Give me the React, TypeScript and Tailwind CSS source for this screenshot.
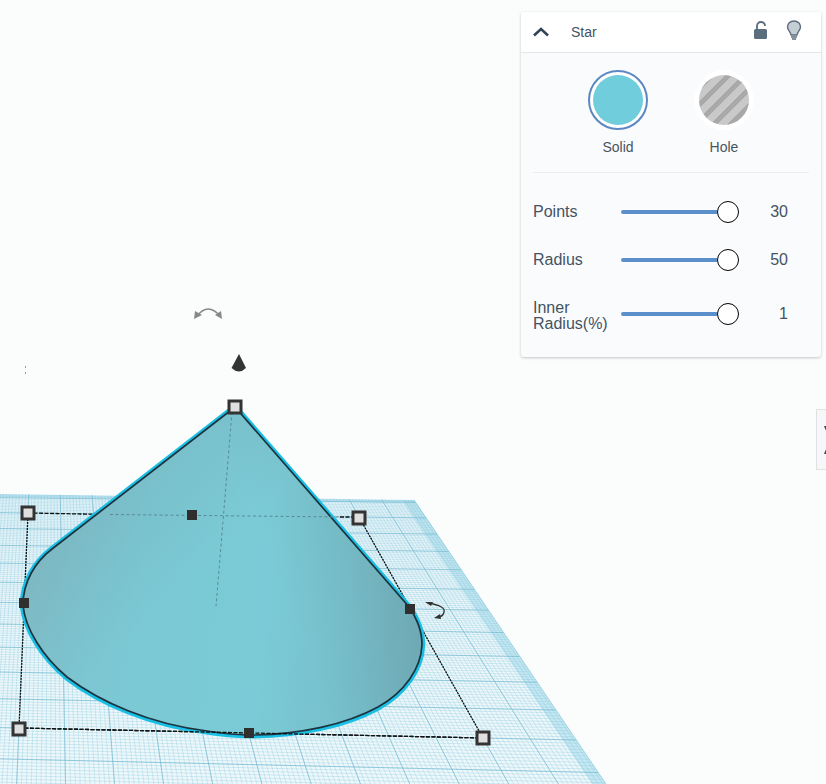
// screen corners of the selection box, used to lay the workplane grid in perspective
const [x0, y0, x1, y1, x2, y2, x3, y3] = [28, 513, 359, 517, 483, 738, 19, 728];
const dx1 = x1 - x2, dx2 = x3 - x2, sx = x0 - x1 + x2 - x3;
const dy1 = y1 - y2, dy2 = y3 - y2, sy = y0 - y1 + y2 - y3;
const den = dx1 * dy2 - dx2 * dy1;
const g = (sx * dy2 - dx2 * sy) / den;
const h = (dx1 * sy - sx * dy1) / den;

const project = (u: number, v: number) => {
    const w = g * u + h * v + 1;
    const x = ((x1 - x0 + g * x1) * u + (x3 - x0 + h * x3) * v + x0) / w;
    const y = ((y1 - y0 + g * y1) * u + (y3 - y0 + h * y3) * v + y0) / w;
    return `${x.toFixed(1)} ${y.toFixed(1)}`;
};

const gridPath = (step: number) => {
    let d = '';
    for (let i = Math.round(-1 / step); i <= Math.round(1.6 / step); i++) {
        const t = i * step;
        d += `M${project(t, -0.2)}L${project(t, 1.5)}`;
        if (t >= -0.2 && t <= 1.5) d += `M${project(-1, t)}L${project(1.6, t)}`;
    }
    return d;
};

const conePath =
    'M235 407L52 549C35 562 23 582 23 605C25 628 42 656 67 677C100 702 150 724 207 731C225 734 240 735 255 735C300 734 345 725 378 707C405 692 421 668 422 645C422 630 417 620 410 608Z';

const cornerHandles = [[235, 407], [28, 513], [359, 518], [19, 729], [483, 738]];
const edgeHandles = [[192, 515], [24, 603], [410, 609], [249, 733]];

const sliders = [
    { label: 'Points', value: 30, labelClass: '' },
    { label: 'Radius', value: 50, labelClass: '' },
    { label: 'Inner Radius(%)', value: 1, labelClass: 'pt-1' },
];

function Scene() {
    return (
        <svg className="absolute inset-0" width="826" height="784" viewBox="0 0 826 784">
            <defs>
                <clipPath id="plane">
                    <polygon points="0,494 414,500 606,784 0,784" />
                </clipPath>
                <clipPath id="cone">
                    <path d={conePath} />
                </clipPath>
                <linearGradient id="coneFill" gradientUnits="userSpaceOnUse" x1="20" y1="600" x2="425" y2="640">
                    <stop offset="0" stopColor="#7fc2cd" />
                    <stop offset="0.3" stopColor="#7ac9d5" />
                    <stop offset="0.6" stopColor="#7acbd7" />
                    <stop offset="0.8" stopColor="#76c0cc" />
                    <stop offset="1" stopColor="#70b2be" />
                </linearGradient>
                <linearGradient id="shadeLeft" gradientUnits="userSpaceOnUse" x1="50" y1="540" x2="140" y2="630">
                    <stop offset="0" stopColor="#6f6f6f" stopOpacity="0.13" />
                    <stop offset="1" stopColor="#6f6f6f" stopOpacity="0" />
                </linearGradient>
                <linearGradient id="shadeRight" gradientUnits="userSpaceOnUse" x1="400" y1="570" x2="290" y2="610">
                    <stop offset="0" stopColor="#5f5f5f" stopOpacity="0.12" />
                    <stop offset="1" stopColor="#5f5f5f" stopOpacity="0" />
                </linearGradient>
            </defs>

            {/* workplane */}
            <g clipPath="url(#plane)">
                <rect x="0" y="490" width="620" height="294" fill="#eef8fb" />
                <polygon points="414,500 606,784 592,784 402,500" fill="#a5dbeb" opacity="0.55" />
                <polygon points="0,494 414,500 414,503 0,497" fill="#a5dbeb" opacity="0.6" />
                <path d={gridPath(0.01)} stroke="#74c0d9" strokeWidth="0.4" opacity="0.7" fill="none" />
                <path d={gridPath(0.1)} stroke="#78bcd2" strokeWidth="0.7" fill="none" />
            </g>
            <line x1="414" y1="500" x2="606" y2="784" stroke="#8ccbe0" strokeWidth="0.8" />

            {/* selection box, behind the cone */}
            <g stroke="#111" strokeWidth="1.3" strokeDasharray="4 1.5" fill="none">
                <path d="M28 513L110 514.5" />
                <path d="M28 513L19 728" strokeDasharray="2 1" />
                <path d="M19 728L483 738" />
                <path d="M340 517L359 517" />
                <path d="M359 517L483 738" strokeDasharray="2 1" />
            </g>

            {/* cone */}
            <path d={conePath} transform="translate(0 0.3)" fill="#1bbfe3" stroke="#1bbfe3" strokeWidth="6.5" />
            <path d={conePath} fill="url(#coneFill)" />
            <g clipPath="url(#cone)">
                <rect x="0" y="400" width="450" height="340" fill="url(#shadeLeft)" />
                <rect x="0" y="400" width="450" height="340" fill="url(#shadeRight)" />
            </g>
            <path d={conePath} fill="none" stroke="#1b3440" strokeWidth="1.7" />

            {/* box lines seen through the cone */}
            <g stroke="#5b8a95" strokeWidth="1" strokeDasharray="3 2.5" fill="none">
                <path d="M232 412L216 606" />
                <path d="M110 514.5L340 517" />
            </g>
            <path d="M19 728L483 738" stroke="#111" strokeWidth="1.3" strokeDasharray="4 1.5" />

            {/* handles */}
            {cornerHandles.map(([x, y]) => (
                <rect key={`${x}-${y}`} x={x - 6} y={y - 6} width="12" height="12" fill="#dfdfdf" stroke="#333" strokeWidth="3" />
            ))}
            {edgeHandles.map(([x, y]) => (
                <rect key={`${x}-${y}`} x={x - 5} y={y - 5} width="10" height="10" fill="#2f2f2f" />
            ))}

            {/* height arrow */}
            <path d="M239 354L231.5 368Q239 375 246 368Z" fill="#333" />

            {/* rotate arrows */}
            <path d="M197 316Q208 302 220 316" stroke="#888" strokeWidth="1.6" fill="none" />
            <polygon points="194,319 195,311 202,315" fill="#888" />
            <polygon points="222,319 221,311 215,315" fill="#888" />
            <path d="M428 603Q446 606 444 612Q443 617 437 617" stroke="#333" strokeWidth="1.3" fill="none" />
            <polygon points="425,602 433,602 431,606" fill="#333" />
            <polygon points="434,618 440,614 441,619" fill="#333" />

            {/* view cube leftovers */}
            <rect x="25" y="366" width="1" height="2" fill="#999" />
            <rect x="25" y="372" width="1" height="2" fill="#999" />
        </svg>
    );
}

function LockIcon() {
    return (
        <svg width="16" height="20" viewBox="0 0 16 20">
            <rect x="1" y="9" width="13" height="10" rx="1.5" fill="#5c6d7e" />
            <path d="M4 9V6C4 3.5 5.5 2 8 2C10.5 2 12 3.5 12 6" fill="none" stroke="#5c6d7e" strokeWidth="1.8" />
        </svg>
    );
}

function BulbIcon() {
    return (
        <svg width="16" height="20" viewBox="0 0 16 20">
            <path d="M8 1C4 1 1.5 3.8 1.5 7C1.5 10 4.5 11.5 5 15H11C11.5 11.5 14.5 10 14.5 7C14.5 3.8 12 1 8 1Z" fill="#c6ced5" stroke="#5c6d7e" strokeWidth="1.4" />
            <path d="M5 17H11M6 19H10" stroke="#5c6d7e" strokeWidth="1.4" />
        </svg>
    );
}

function Slider({ label, value, labelClass }: { label: string; value: number; labelClass: string }) {
    return (
        <div className="flex items-center">
            <div className={`w-[88px] text-base leading-4 text-[#435363] ${labelClass}`}>{label}</div>
            <div className="flex w-[118px] items-center">
                <div className="h-1 w-[96px] rounded-l-sm bg-[#5b8fcb]" />
                <div className="h-[22px] w-[22px] rounded-full border border-black bg-white" />
            </div>
            <div className="h-6 w-[49px] text-right text-base leading-6 text-[#435363]">{value}</div>
        </div>
    );
}

function Panel() {
    return (
        <div className="absolute left-[521px] top-3 h-[345px] w-[300px] rounded-[3px] bg-[#fafbfc] shadow-[0_1px_3px_rgba(0,0,0,0.22)]">
            <div className="flex h-[41px] items-center rounded-t-[3px] border-b border-[#e4e6e8] bg-white pl-3 pr-[19px]">
                <svg width="16" height="10" viewBox="0 0 16 10">
                    <path d="M1 8.5L8 2L15 8.5" fill="none" stroke="#2f4458" strokeWidth="2.6" />
                </svg>
                <span className="ml-[22px] flex-1 text-sm text-[#435363]">Star</span>
                <div className="mb-1 flex items-center gap-[17px]">
                    <LockIcon />
                    <BulbIcon />
                </div>
            </div>

            <div className="mx-3 flex justify-center gap-[46px] border-b border-[#eceef0] pt-[17px] pb-[17px]">
                <div className="flex flex-col items-center gap-[9px]">
                    <div className="h-[60px] w-[60px] rounded-full border-2 border-[#5b87c5] bg-white p-[3px]">
                        <div className="h-full w-full rounded-full bg-[#70cddc]" />
                    </div>
                    <span className="text-sm leading-4 text-[#4a5560]">Solid</span>
                </div>
                <div className="flex flex-col items-center gap-[9px]">
                    <div className="h-[60px] w-[60px] rounded-full bg-white p-[5px]">
                        <div className="h-full w-full rounded-full bg-[repeating-linear-gradient(135deg,#c9c9c9_0,#c9c9c9_7px,#a9a9a9_7px,#a9a9a9_12px)]" />
                    </div>
                    <span className="text-sm leading-4 text-[#4a5560]">Hole</span>
                </div>
            </div>

            <div className="flex flex-col gap-6 pt-[27px] pl-3">
                {sliders.map(s => (
                    <Slider key={s.label} label={s.label} value={s.value} labelClass={s.labelClass} />
                ))}
            </div>
        </div>
    );
}

export default function App() {
    return (
        <div className="relative h-[784px] w-[826px] overflow-hidden bg-[#fbfcfc] font-['Liberation_Sans',sans-serif]">
            <Scene />
            <Panel />
            <div className="absolute left-[816px] top-[409px] h-[61px] w-[20px] border border-[#dfe1e3] bg-[#f6f7f8]">
                <svg width="10" height="59" viewBox="0 0 10 59">
                    <path d="M7 16L9.5 22L12 16Z" fill="#444" />
                    <path d="M7 44L9.5 38L12 44Z" fill="#444" />
                </svg>
            </div>
        </div>
    );
}
